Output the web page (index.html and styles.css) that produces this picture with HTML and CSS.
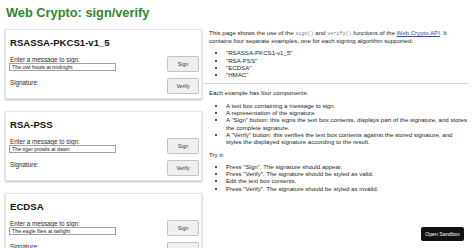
FILE: index.html
```html
<!DOCTYPE html>
<html lang="en">
<head>
<meta charset="utf-8">
<title>Web Crypto: sign/verify</title>
<link rel="stylesheet" href="styles.css">
</head>
<body>
<h1 class="title">Web Crypto: sign/verify</h1>
<main class="layout">
  <div class="examples">
    <section class="card">
      <h2 class="card-heading">RSASSA-PKCS1-v1_5</h2>
      <div class="controls">
        <div class="message">
          <label class="label" for="m1">Enter a message to sign:</label>
          <input class="msg-input" id="m1" type="text" value="The owl hoots at midnight">
        </div>
        <button class="btn">Sign</button>
        <div class="signature">Signature:</div>
        <button class="btn">Verify</button>
      </div>
    </section>
    <section class="card">
      <h2 class="card-heading">RSA-PSS</h2>
      <div class="controls">
        <div class="message">
          <label class="label" for="m2">Enter a message to sign:</label>
          <input class="msg-input" id="m2" type="text" value="The tiger prowls at dawn">
        </div>
        <button class="btn">Sign</button>
        <div class="signature">Signature:</div>
        <button class="btn">Verify</button>
      </div>
    </section>
    <section class="card">
      <h2 class="card-heading">ECDSA</h2>
      <div class="controls">
        <div class="message">
          <label class="label" for="m3">Enter a message to sign:</label>
          <input class="msg-input" id="m3" type="text" value="The eagle flies at twilight">
        </div>
        <button class="btn">Sign</button>
        <div class="signature">Signature:</div>
        <button class="btn">Verify</button>
      </div>
    </section>
    <section class="card">
      <h2 class="card-heading">HMAC</h2>
      <div class="controls">
        <div class="message">
          <label class="label" for="m4">Enter a message to sign:</label>
          <input class="msg-input" id="m4" type="text" value="The bunny hops at teatime">
        </div>
        <button class="btn">Sign</button>
        <div class="signature">Signature:</div>
        <button class="btn">Verify</button>
      </div>
    </section>
  </div>
  <section class="description">
    <p class="para">This page shows the use of the <code class="code">sign()</code> and <code class="code">verify()</code> functions of the <a class="link" href="#">Web Crypto API</a>. It contains four separate examples, one for each signing algorithm supported:</p>
    <ul class="list">
      <li>"RSASSA-PKCS1-v1_5"</li>
      <li>"RSA-PSS"</li>
      <li>"ECDSA"</li>
      <li>"HMAC"</li>
    </ul>
    <hr class="rule">
    <p class="para">Each example has four components:</p>
    <ul class="list">
      <li>A text box containing a message to sign.</li>
      <li>A representation of the signature.</li>
      <li>A "Sign" button: this signs the text box contents, displays part of the signature, and stores the complete signature.</li>
      <li>A "Verify" button: this verifies the text box contents against the stored signature, and styles the displayed signature according to the result.</li>
    </ul>
    <p class="para">Try it:</p>
    <ul class="list">
      <li>Press "Sign". The signature should appear.</li>
      <li>Press "Verify". The signature should be styled as valid.</li>
      <li>Edit the text box contents.</li>
      <li>Press "Verify". The signature should be styled as invalid.</li>
    </ul>
  </section>
</main>
<button class="sandbox">Open Sandbox</button>
</body>
</html>
```

FILE: styles.css
```css
html {
  overflow: hidden;
  background: #fff;
}

body {
  margin: 0;
  padding: 5px 5px 0 5px;
  font-family: "Liberation Sans", Arial, sans-serif;
  font-size: 6.3px;
  line-height: 7.3px;
  color: #1e1e1e;
}

.title {
  margin: 0 0 9px 1px;
  font-size: 12.8px;
  line-height: 15px;
  font-weight: bold;
  color: #2b8a2b;
}

.layout {
  display: flex;
  align-items: flex-start;
}

.examples {
  flex: 0 0 197px;
  display: flex;
  flex-direction: column;
  gap: 12px;
}

.card {
  background: #fff;
  border: 1px solid #e4e4e4;
  box-shadow: 0 1px 2px rgba(0, 0, 0, 0.28);
  padding: 7px 2px 4px 3px;
}

.card-heading {
  margin: 0 0 8px 1px;
  font-size: 9.6px;
  line-height: 11px;
  font-weight: bold;
  color: #111;
}

.controls {
  display: grid;
  grid-template-columns: 1fr 32px;
  row-gap: 6px;
  align-items: start;
}

.message {
  display: flex;
  flex-direction: column;
}

.label {
  padding-left: 1px;
  line-height: 7.4px;
  color: #2a2a2a;
}

.msg-input {
  width: 107px;
  height: 8px;
  box-sizing: border-box;
  margin: 0;
  padding: 0 2px;
  border: 1px solid #a2a2a2;
  border-radius: 0;
  font-family: "Liberation Sans", Arial, sans-serif;
  font-size: 5.3px;
  color: #222;
  background: #fff;
}

.signature {
  padding: 1px 0 0 1px;
  line-height: 7.4px;
  color: #2a2a2a;
}

.btn {
  width: 32px;
  height: 16px;
  margin: 0;
  padding: 0;
  border: 1px solid #c2c2c2;
  border-radius: 1.5px;
  background: #efefef;
  font-family: "Liberation Sans", Arial, sans-serif;
  font-size: 5.3px;
  color: #333;
}

.description {
  flex: 1;
  padding-left: 6px;
  margin-left: 1px;
  font-size: 6.12px;
}

.para {
  margin: 0 0 5px;
}

.code {
  font-family: "Liberation Mono", "Courier New", monospace;
  font-size: 5.1px;
  line-height: 5px;
  color: #777;
}

.link {
  color: #2f4ccc;
  text-decoration: underline;
}

.list {
  margin: 0 0 5px;
  padding-left: 17px;
}

.rule {
  margin: 5px 0 5px -6px;
  border: 0;
  border-top: 1px solid #d6d6d6;
  height: 0;
}

.sandbox {
  position: fixed;
  right: 10px;
  bottom: 7px;
  width: 43px;
  height: 14px;
  padding: 0;
  border: 0;
  border-radius: 2px;
  background: #111;
  color: #fff;
  font-family: "Liberation Sans", Arial, sans-serif;
  font-size: 5.2px;
}
```
